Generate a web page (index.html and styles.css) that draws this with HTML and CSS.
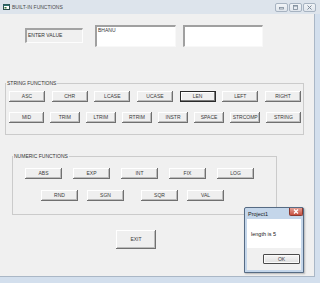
FILE: index.html
```html
<!DOCTYPE html>
<html>
<head>
<meta charset="utf-8">
<title>BUILT-IN FUNCTIONS</title>
<link rel="stylesheet" href="styles.css">
</head>
<body>
<div class="window">
  <div class="titlebar">
    <svg class="app-icon" width="7" height="6" viewBox="0 0 7 6">
      <rect x="0.5" y="0.5" width="6" height="5" fill="#fff" stroke="#2f4f4f"/>
      <rect x="0.5" y="0.5" width="6" height="1.5" fill="#2f6f6f"/>
      <rect x="1.5" y="3" width="2" height="1.5" fill="#3a7a3a"/>
    </svg>
    <span class="title">BUILT-IN FUNCTIONS</span>
    <div class="controls">
      <span class="ctl"><svg width="7" height="5" viewBox="0 0 7 5"><rect x="1.5" y="2.5" width="4" height="1.5" fill="none" stroke="#7d8a99" stroke-width="0.8"/></svg></span>
      <span class="ctl"><svg width="7" height="5" viewBox="0 0 7 5"><rect x="1.5" y="0.5" width="4" height="4" fill="none" stroke="#7d8a99" stroke-width="0.8"/><rect x="1.5" y="0.5" width="4" height="1" fill="#7d8a99"/></svg></span>
      <span class="ctl"><svg width="7" height="5" viewBox="0 0 7 5"><path d="M1.5 0.5 L5.5 4.5 M5.5 0.5 L1.5 4.5" stroke="#7d8a99" stroke-width="1"/></svg></span>
    </div>
  </div>
  <div class="client">
    <div class="top-row">
      <div class="label">ENTER VALUE</div>
      <div class="textbox tb1">BHANU</div>
      <div class="textbox tb2"></div>
    </div>
    <div class="group string-group">
      <span class="group-title">STRING FUNCTIONS</span>
      <div class="btn-row row-a">
        <button class="btn">ASC</button>
        <button class="btn">CHR</button>
        <button class="btn">LCASE</button>
        <button class="btn">UCASE</button>
        <button class="btn focused">LEN</button>
        <button class="btn">LEFT</button>
        <button class="btn">RIGHT</button>
      </div>
      <div class="btn-row row-b">
        <button class="btn">MID</button>
        <button class="btn">TRIM</button>
        <button class="btn">LTRIM</button>
        <button class="btn">RTRIM</button>
        <button class="btn">INSTR</button>
        <button class="btn">SPACE</button>
        <button class="btn">STRCOMP</button>
        <button class="btn">STRING</button>
      </div>
    </div>
    <div class="group numeric-group">
      <span class="group-title">NUMERIC FUNCTIONS</span>
      <div class="num-row1">
        <button class="btn">ABS</button>
        <button class="btn">EXP</button>
        <button class="btn">INT</button>
        <button class="btn">FIX</button>
        <button class="btn">LOG</button>
      </div>
      <div class="num-row2">
        <button class="btn">RND</button>
        <button class="btn">SGN</button>
        <button class="btn">SQR</button>
        <button class="btn">VAL</button>
      </div>
    </div>
    <button class="btn exit">EXIT</button>
  </div>
  <div class="msgbox">
    <div class="msg-title">Project1</div>
    <span class="msg-close"><svg width="6" height="5" viewBox="0 0 6 5"><path d="M1 0.5 L5 4.5 M5 0.5 L1 4.5" stroke="#fff" stroke-width="1.3"/></svg></span>
    <div class="msg-body">length is 5</div>
    <div class="msg-foot"><button class="btn ok">OK</button></div>
  </div>
</div>
</body>
</html>
```
FILE: styles.css
```css
* { box-sizing: border-box; }
html, body { margin: 0; padding: 0; }
body {
  width: 320px;
  height: 283px;
  overflow: hidden;
  font-family: "Liberation Sans", Arial, sans-serif;
  background: #d3dfed;
}
.window {
  position: relative;
  width: 320px;
  height: 283px;
  display: flex;
  flex-direction: column;
  background: #d3dfed;
}
.titlebar {
  height: 14px;
  flex: none;
  display: flex;
  align-items: center;
  background: #dde4ec;
  padding-left: 3px;
}
.app-icon { display: block; }
.title {
  margin-left: 2px;
  font-size: 5px;
  color: #4a4a4a;
}
.controls {
  margin-left: auto;
  margin-right: 4px;
  display: flex;
  gap: 1px;
  align-self: flex-start;
  margin-top: 3px;
}
.ctl {
  width: 13px;
  height: 9px;
  border: 1px solid #a7b3c1;
  border-radius: 2px;
  background: linear-gradient(#f1f4f7, #e0e6ed);
  display: flex;
  align-items: center;
  justify-content: center;
}
.client {
  position: relative;
  flex: 1;
  width: 315px;
  margin-bottom: 6px;
  background: #f0f0f0;
  border-right: 1px solid #aab7c6;
  border-bottom: 1px solid #aab7c6;
  font-size: 5px;
  color: #333;
  overflow: hidden;
}
.top-row {
  display: flex;
  align-items: flex-start;
  margin-top: 11px;
  padding-left: 25px;
}
.label {
  margin-top: 3px;
  width: 58px;
  height: 15px;
  border-top: 2px solid #a3a3a3;
  border-left: 2px solid #a3a3a3;
  border-right: 1px solid #fdfdfd;
  border-bottom: 1px solid #fdfdfd;
  padding: 2px 1px 0;
  line-height: 6px;
  white-space: nowrap;
}
.textbox {
  height: 22px;
  background: #fff;
  border-top: 2px solid #a0a0a0;
  border-left: 2px solid #a0a0a0;
  border-right: 1px solid #f8f8f8;
  border-bottom: 1px solid #f8f8f8;
  padding: 0 1px;
  line-height: 6px;
}
.tb1 { margin-left: 12px; width: 81px; }
.tb2 { margin-left: 7px; width: 80px; }
.group {
  position: relative;
  border: 1px solid #cbcbcb;
}
.group-title {
  position: absolute;
  top: -4px;
  left: 0;
  padding: 0 1px;
  background: #f0f0f0;
  line-height: 7px;
  font-size: 5px;
  white-space: nowrap;
}
.string-group {
  margin: 36px 0 0 5px;
  width: 299px;
  height: 52px;
  padding: 7px 2px 0 3px;
  display: flex;
  flex-direction: column;
  gap: 10px;
}
.btn-row {
  display: flex;
  justify-content: space-between;
}
.row-a .btn { width: 36px; }
.row-b .btn { width: 30.5px; }
.row-b .btn:first-child,
.row-b .btn:last-child { width: 35px; }
.numeric-group {
  margin: 21px 0 0 12px;
  width: 265px;
  height: 59px;
  padding-top: 11px;
  display: flex;
  flex-direction: column;
  gap: 11px;
}
.num-row1 {
  display: flex;
  gap: 11px;
  padding-left: 12px;
}
.num-row2 {
  display: flex;
  gap: 9px;
  padding-left: 28px;
}
.num-row2 .btn:nth-child(3) { margin-left: 8px; }
.numeric-group .btn { width: 37px; }
.btn {
  display: block;
  height: 11px;
  margin: 0;
  padding: 0;
  border: none;
  font-family: "Liberation Sans", Arial, sans-serif;
  font-size: 5px;
  line-height: 11px;
  text-align: center;
  color: #3a3a3a;
  background: #efefef;
  box-shadow: inset -1px -1px 0 #707070, inset 1px 1px 0 #ffffff, inset -2px -2px 0 #bcbcbc;
  white-space: nowrap;
}
.btn.focused {
  box-shadow: inset 0 0 0 1px #2a2a2a, inset -2px -2px 0 #7a7a7a, inset 2px 2px 0 #ffffff;
}
.exit {
  margin: 15px 0 0 116px;
  width: 40px;
  height: 19px;
  line-height: 19px;
}
.msgbox {
  position: absolute;
  left: 244px;
  top: 207px;
  width: 60px;
  height: 66px;
  border: 1px solid #566b84;
  border-radius: 2px 2px 0 0;
  background: #c4d6ea;
  padding: 0 2px 2px 2px;
  display: flex;
  flex-direction: column;
  box-shadow: 1px 1px 2px rgba(0, 0, 0, 0.25);
}
.msg-title {
  height: 11px;
  flex: none;
  display: flex;
  align-items: center;
  padding-left: 1px;
  font-size: 5.5px;
  color: #1a1a1a;
}
.msg-close {
  position: absolute;
  top: 0;
  right: 0;
  width: 14px;
  height: 8px;
  background: linear-gradient(#e4a096, #c8503f);
  border: 1px solid #8a3a30;
  border-top: none;
  border-radius: 0 0 2px 2px;
  display: flex;
  align-items: center;
  justify-content: center;
}
.msg-body {
  height: 29px;
  flex: none;
  background: #fff;
  display: flex;
  align-items: center;
  padding-left: 4px;
  font-size: 5.5px;
  color: #1a1a1a;
}
.msg-foot {
  flex: 1;
  background: #f0f0f0;
  padding: 6px 0 0 16px;
}
.btn.ok {
  width: 37px;
  height: 10px;
  line-height: 8px;
  border: 1px solid #4a4a4a;
  border-radius: 1px;
  background: linear-gradient(#f6f6f6, #dedede);
  box-shadow: inset 0 0 0 1px #fafafa;
}
```
